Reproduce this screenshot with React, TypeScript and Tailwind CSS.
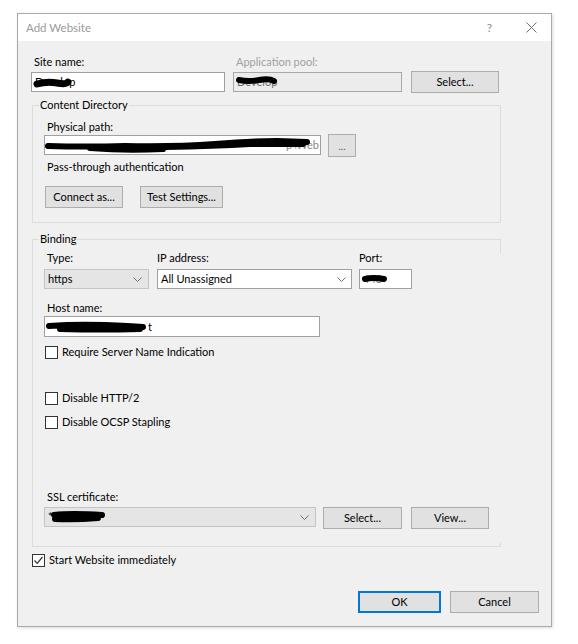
import React from "react";

function Chevron() {
  return (
    <svg width="9" height="5" viewBox="0 0 9 5" className="shrink-0">
      <path d="M0.5 0.5 L4.5 4.5 L8.5 0.5" stroke="#707070" strokeWidth="1" fill="none" />
    </svg>
  );
}

function CheckBox({ checked = false }: { checked?: boolean }) {
  return (
    <div className="w-[13px] h-[13px] border border-[#333333] bg-white shrink-0 flex items-center justify-center">
      {checked && (
        <svg width="11" height="11" viewBox="0 0 11 11">
          <path d="M1.5 5.5 L4.2 8.3 L9.5 2" stroke="#333333" strokeWidth="1.2" fill="none" />
        </svg>
      )}
    </div>
  );
}

function Blob({ d, w, h, sw = 7, className }: { d: string; w: number; h: number; sw?: number; className: string }) {
  return (
    <svg width={w} height={h} viewBox={`0 0 ${w} ${h}`} className={className}>
      <path d={d} stroke="#000" strokeLinecap="round" strokeLinejoin="round" fill="none" strokeWidth={sw} />
    </svg>
  );
}

export default function App() {
  return (
    <div className="w-[578px] h-[644px] bg-white overflow-hidden font-[Lato,'Noto_Sans',sans-serif] text-[11px] leading-[16px] text-black">
      <div className="ml-[17px] mt-[13px] w-[535px] h-[614px] border border-[#a9a9a9] bg-[#f0f0f0] shadow-[1px_1px_3px_rgba(0,0,0,0.15)] flex flex-col">
        {/* title bar */}
        <div className="h-[27px] bg-white flex items-center pl-[8px] pr-[14px] shrink-0">
          <span className="text-[#9a9a9a] text-[11.5px]">Add Website</span>
          <div className="ml-auto flex items-center">
            <span className="text-[#8a8a8a] text-[12px]">?</span>
            <svg width="11" height="11" viewBox="0 0 11 11" className="ml-[34px]">
              <path d="M0.5 0.5 L10.5 10.5 M10.5 0.5 L0.5 10.5" stroke="#707070" strokeWidth="1" />
            </svg>
          </div>
        </div>

        {/* body */}
        <div className="flex flex-col pl-[13px] pt-[13px]">
          <div className="flex h-[16px]">
            <div className="w-[202px] pl-[3px]">Site name:</div>
            <div className="pl-[3px] text-[#a0a0a0]">Application pool:</div>
          </div>
          <div className="flex items-start mt-[2px] h-[20px]">
            <div className="relative w-[194px] h-[20px] border border-[#a0a0a0] bg-white pl-[3px] leading-[18px] overflow-hidden">
              Develop
              <Blob w={40} h={14} d="M4 8 Q14 5 24 7 T35 6" className="absolute left-[1px] top-[3px]" />
            </div>
            <div className="relative ml-[8px] w-[169px] h-[20px] border border-[#a8a8a8] bg-[#ececec] pl-[3px] leading-[18px] overflow-hidden text-[#6d6d6d]">
              Develop
              <Blob w={44} h={12} d="M4 5 Q14 7 24 5 T39 6" sw={6} className="absolute left-[1px] top-[2px]" />
            </div>
            <div className="ml-[9px] -mt-[1px] w-[88px] h-[22px] border border-[#adadad] bg-[#e1e1e1] flex items-center justify-center shrink-0">
              Select...
            </div>
          </div>

          {/* Content Directory */}
          <div className="ml-[1px] mt-[13px] w-[469px] h-[118px] border border-[#dcdcdc] flex flex-col pl-[11px]">
            <div className="-mt-[9px] h-[16px] -ml-[5px] self-start px-[1px] bg-[#f0f0f0]">Content Directory</div>
            <div className="mt-[6px] pl-[3px] h-[16px]">Physical path:</div>
            <div className="flex items-start h-[20px]">
              <div className="relative w-[277px] h-[20px] border border-[#a0a0a0] bg-white overflow-hidden text-right pr-[1px] leading-[18px] text-[#888]">
                p\Web
                <Blob
                  w={276}
                  h={18}
                  d="M3 10 Q40 11 80 10 Q130 11 170 8 Q205 5 232 5 L262 6 M45 12 Q80 15 118 13 M120 11 Q170 10 205 8 L258 8"
                  sw={6}
                  className="absolute left-0 top-0"
                />
              </div>
              <div className="ml-[7px] -mt-[1px] w-[28px] h-[23px] border border-[#adadad] bg-[#e1e1e1] flex items-center justify-center text-[#555] text-[10px] shrink-0">
                ...
              </div>
            </div>
            <div className="mt-[4px] pl-[3px] h-[16px]">Pass-through authentication</div>
            <div className="flex mt-[11px] ml-[1px]">
              <div className="w-[78px] h-[22px] border border-[#adadad] bg-[#e1e1e1] flex items-center justify-center">
                Connect as...
              </div>
              <div className="ml-[17px] w-[83px] h-[22px] border border-[#adadad] bg-[#e1e1e1] flex items-center justify-center">
                Test Settings...
              </div>
            </div>
          </div>

          {/* Binding */}
          <div className="relative ml-[1px] mt-[16px] w-[469px] h-[308px] border-l border-t border-b border-[#dcdcdc] flex flex-col pl-[11px]">
            <div className="absolute right-0 top-0 w-[1px] h-[13px] bg-[#dcdcdc]" />
            <div className="absolute right-0 bottom-0 w-[1px] h-[4px] bg-[#dcdcdc]" />
            <div className="-mt-[9px] h-[16px] -ml-[5px] self-start px-[1px] bg-[#f0f0f0]">Binding</div>
            <div className="grid grid-cols-[113px_202px_53px] mt-[3px]">
              <div className="pl-[3px] h-[16px]">Type:</div>
              <div className="h-[16px]">IP address:</div>
              <div className="h-[16px]">Port:</div>
              <div className="mt-[3px] w-[105px] h-[20px] border border-[#c4c4c4] bg-[#e5e5e5] flex items-center pl-[3px] pr-[6px]">
                <span>https</span>
                <span className="ml-auto"><Chevron /></span>
              </div>
              <div className="mt-[3px] w-[195px] h-[20px] border border-[#a0a0a0] bg-white flex items-center pl-[3px] pr-[5px]">
                <span>All Unassigned</span>
                <span className="ml-auto"><Chevron /></span>
              </div>
              <div className="relative mt-[3px] w-[53px] h-[20px] border border-[#a0a0a0] bg-white pl-[3px] leading-[18px] overflow-hidden text-[#777]">
                443
                <Blob w={28} h={12} d="M4 6 Q12 4 23 6" sw={6} className="absolute left-[1px] top-[3px]" />
              </div>
            </div>
            <div className="mt-[11px] pl-[3px] h-[16px]">Host name:</div>
            <div className="relative w-[276px] h-[21px] border border-[#a0a0a0] bg-white leading-[19px] overflow-hidden">
              <span className="pl-[103px]">t</span>
              <Blob
                w={106}
                h={16}
                d="M4 7 Q30 5 60 6 Q85 7 98 8 M15 10 Q55 11 95 10"
                sw={6}
                className="absolute left-0 top-[2px]"
              />
            </div>
            <div className="mt-[7px] flex items-center h-[16px] ml-[1px]">
              <CheckBox />
              <span className="ml-[4px]">Require Server Name Indication</span>
            </div>
            <div className="mt-[30px] flex items-center h-[16px] ml-[1px]">
              <CheckBox />
              <span className="ml-[4px]">Disable HTTP/2</span>
            </div>
            <div className="mt-[8px] flex items-center h-[16px] ml-[1px]">
              <CheckBox />
              <span className="ml-[4px]">Disable OCSP Stapling</span>
            </div>
            <div className="mt-[59px] pl-[3px] h-[16px]">SSL certificate:</div>
            <div className="flex items-start mt-[2px]">
              <div className="relative w-[272px] h-[20px] border border-[#c4c4c4] bg-[#e5e5e5] flex items-center pl-[3px] pr-[6px] overflow-hidden">
                <span>*</span>
                <span className="ml-auto"><Chevron /></span>
                <Blob w={62} h={16} d="M8 6 Q25 4 56 6 M9 10 Q30 11 52 9" sw={6} className="absolute left-[1px] top-[1px]" />
              </div>
              <div className="ml-[7px] w-[79px] h-[22px] border border-[#adadad] bg-[#e1e1e1] flex items-center justify-center">
                Select...
              </div>
              <div className="ml-[9px] w-[78px] h-[22px] border border-[#adadad] bg-[#e1e1e1] flex items-center justify-center">
                View...
              </div>
            </div>
          </div>

          <div className="mt-[5px] flex items-center h-[16px] ml-[1px]">
            <CheckBox checked />
            <span className="ml-[4px]">Start Website immediately</span>
          </div>

          <div className="mt-[23px] flex pr-[12px] justify-end">
            <div className="w-[83px] h-[22px] border-2 border-[#0078d7] bg-[#e1e1e1] flex items-center justify-center">
              OK
            </div>
            <div className="ml-[9px] w-[89px] h-[22px] border border-[#adadad] bg-[#e1e1e1] flex items-center justify-center">
              Cancel
            </div>
          </div>
        </div>
      </div>
    </div>
  );
}
